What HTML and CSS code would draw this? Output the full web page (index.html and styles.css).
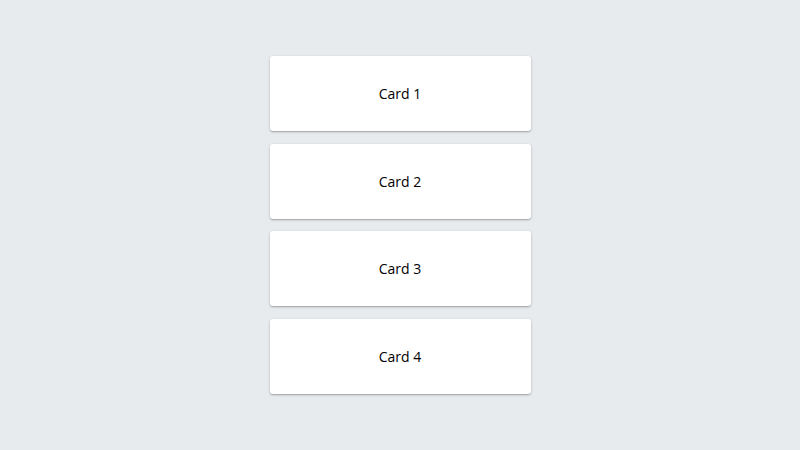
FILE: index.html
```html
<!DOCTYPE html>
<html lang="en">
<head>
  <meta charset="UTF-8">
  <title>Cards</title>
  <link rel="stylesheet" href="styles.css">
</head>
<body>
  <div class="stack">
    <div class="card">Card 1</div>
    <div class="card">Card 2</div>
    <div class="card">Card 3</div>
    <div class="card">Card 4</div>
  </div>
</body>
</html>
```

FILE: styles.css
```css
html, body { margin: 0; height: 100%; }
body { background: #e8ebee; font-family: "Open Sans", "Noto Sans", sans-serif; display: flex; align-items: center; justify-content: center; }
.stack { display: flex; flex-direction: column; gap: 12.5px; width: 261px; }
.card { height: 75px; background: #fff; border-radius: 3px; box-shadow: 0 1px 3px rgba(0,0,0,0.2), 0 1px 1px rgba(0,0,0,0.15); display: flex; align-items: center; justify-content: center; font-size: 14px; color: #000; }
```
